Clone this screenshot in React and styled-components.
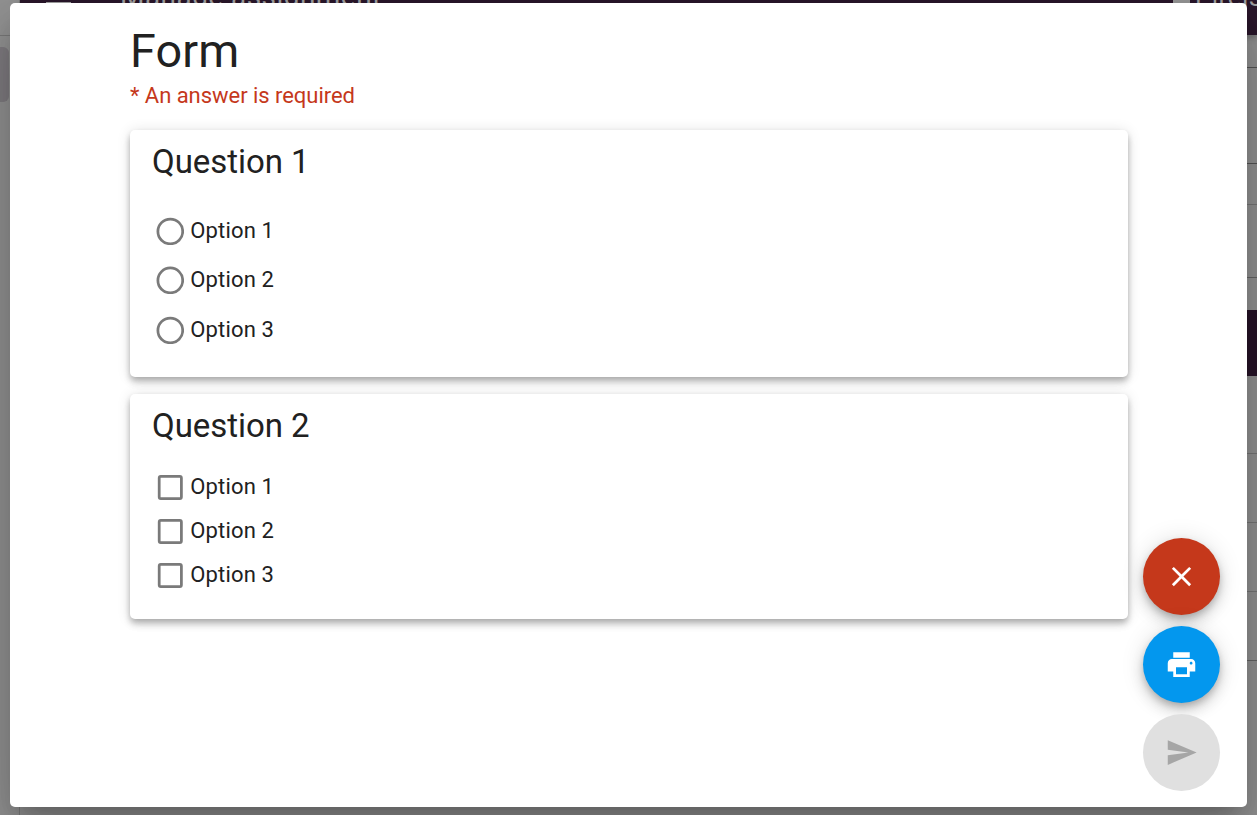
import React from "react"
import styled, { createGlobalStyle } from "styled-components"

const GlobalStyle = createGlobalStyle`
* {
    box-sizing: border-box;
}
body {
    margin: 0;
    overflow: hidden;
    font-family: Roboto, sans-serif;
    color: #212121;
    background: #949494;
}
`;

const Screen = styled.div`
position: relative;
height: 815px;
overflow: hidden;
`;

// page behind the dialog
const Page = styled.div`
display: flex;
height: 815px;
`;

const SideNav = styled.div`
width: 20px;
padding-top: 35px;
border-right: 1px solid #7d7d7d;
`;

const NavItem = styled.div`
height: 55px;
margin-top: 11px;
width: 9px;
border-radius: 0 6px 6px 0;
background: #817d82;
`;

const NavLine = styled.div`
height: 1px;
background: #7a7a7a;
`;

const Content = styled.div`
flex: 1;
`;

const Header = styled.div`
display: flex;
height: 35px;
padding-left: 26px;
background: #2a172b;
color: #a3a3a3;
box-shadow: 0 3px 6px rgba(0,0,0,0.25);
`;

const MenuBar = styled.div`
width: 25px;
height: 3px;
margin: 2px 49px 0 0;
background: #a3a3a3;
`;

const HeaderText = styled.div`
width: ${props => props.$width};
margin-top: -19px;
font-size: ${props => props.$size};
font-weight: 400;
line-height: 32px;
letter-spacing: 0.45px;
white-space: nowrap;
`;

const HeaderIcon = styled.div`
width: 17px;
height: 3px;
margin-right: 5px;
background: #999;
`;

const Row = styled.div`
height: ${props => props.$height}px;
border-bottom: 1px solid ${props => props.$line || "#777"};
`;

const Band = styled.div`
height: 66px;
margin-top: 32px;
background: #281529;
`;

const Dialog = styled.div`
position: absolute;
top: 3px;
left: 10px;
width: 1237px;
height: 804px;
padding: 19px 119px 0 120px;
border-radius: 5px;
background: #fff;
box-shadow: 0 15px 21px -10px rgba(0,0,0,0.2), 0 33px 52px 4px rgba(0,0,0,0.14), 0 12px 63px 11px rgba(0,0,0,0.12);
`;

const Title = styled.h1`
margin: 0;
font-size: 46.75px;
font-weight: 400;
line-height: 58px;
letter-spacing: 0.15px;
`;

const Required = styled.p`
margin: 1px 0 19px;
font-size: 22px;
line-height: 30px;
letter-spacing: -0.04px;
color: #c5381b;
`;

const Card = styled.div`
height: ${props => props.$height}px;
margin-bottom: 17px;
padding: 11px 22px;
border-radius: 5px;
background: #fff;
box-shadow: 0 3px 6px -1px rgba(0,0,0,0.2), 0 6px 7px 0 rgba(0,0,0,0.14), 0 1px 14px 0 rgba(0,0,0,0.12);
`;

const Question = styled.h2`
margin: 0;
font-size: 33px;
font-weight: 400;
line-height: 42px;
letter-spacing: -0.05px;
`;

const Options = styled.div`
display: flex;
flex-direction: column;
gap: ${props => props.$gap}px;
margin-top: ${props => props.$top}px;
padding-left: 4px;
`;

const Option = styled.label`
display: flex;
align-items: center;
height: 28px;
font-size: 22px;
letter-spacing: 0.15px;
`;

function Mark(props){
    return (
        <svg width="28" height="28" viewBox="0 0 28 28" fill="none" stroke="#7a7a7a" strokeWidth="2.75">
            {props.round
                ? <circle cx="14.3" cy="14.4" r="12.4" />
                : <rect x="3.2" y="3.4" width="22.2" height="22.2" rx="1.6" />}
        </svg>
    )
}

const OptionText = styled.span`
line-height: 26px;
margin: -0.3px 0 0 6.3px;
`;

const Actions = styled.div`
position: absolute;
right: 27px;
bottom: 16px;
display: flex;
flex-direction: column;
gap: 11px;
`;

const Fab = styled.button`
display: flex;
align-items: center;
justify-content: center;
width: 77px;
height: 77px;
padding: 0;
border: 0;
border-radius: 50%;
color: ${props => props.$fg || "#fff"};
background: ${props => props.$bg};
box-shadow: ${props => props.disabled ? "none" : "0 4px 7px -1px rgba(0,0,0,0.2), 0 8px 14px 0 rgba(0,0,0,0.14), 0 1px 25px 0 rgba(0,0,0,0.12)"};
`;

function Icon(props){
    return (
        <svg width="33" height="33" viewBox="0 0 24 24" fill="currentColor">
            <path d={props.d} />
        </svg>
    )
}

const questions = [
    { title: "Question 1", round: true, height: 247, top: 34, gap: 21.4 },
    { title: "Question 2", round: false, height: 225, top: 26, gap: 16 }
]

const options = ["Option 1", "Option 2", "Option 3"]

export default function App(){

    return (
        <Screen>
            <GlobalStyle />
            <Page>
                <SideNav>
                    <NavLine />
                    <NavItem />
                </SideNav>
                <Content>
                    <Header>
                        <MenuBar />
                        <HeaderText $width="1053px" $size="28px">Manage assignment</HeaderText>
                        <HeaderIcon />
                        <HeaderText $width="60px" $size="26px">Pireis</HeaderText>
                    </Header>
                    <Row $height={33} $line="#555" />
                    <Row $height={96} $line="#555" />
                    <Row $height={41} />
                    <Row $height={73} $line="#666" />
                    <Band />
                    <Row $height={78} />
                    <Row $height={69} />
                    <Row $height={69} />
                    <Row $height={69} $line="#666" />
                </Content>
            </Page>
            <Dialog>
                <Title>Form</Title>
                <Required>* An answer is required</Required>
                {questions.map(q => (
                    <Card key={q.title} $height={q.height}>
                        <Question>{q.title}</Question>
                        <Options $top={q.top} $gap={q.gap}>
                            {options.map(o => (
                                <Option key={o}>
                                    <Mark round={q.round} />
                                    <OptionText>{o}</OptionText>
                                </Option>
                            ))}
                        </Options>
                    </Card>
                ))}
                <Actions>
                    <Fab $bg="#c5381b">
                        <Icon d="M19 6.41 17.59 5 12 10.59 6.41 5 5 6.41 10.59 12 5 17.59 6.41 19 12 13.41 17.59 19 19 17.59 13.41 12z" />
                    </Fab>
                    <Fab $bg="#0397ee">
                        <Icon d="M19 8H5c-1.66 0-3 1.34-3 3v6h4v4h12v-4h4v-6c0-1.66-1.34-3-3-3zm-3 11H8v-5h8v5zm3-7c-.55 0-1-.45-1-1s.45-1 1-1 1 .45 1 1-.45 1-1 1zm-1-9H6v4h12V3z" />
                    </Fab>
                    <Fab $bg="#e0e0e0" $fg="#a6a6a6" disabled>
                        <Icon d="M2.01 21 23 12 2.01 3 2 10l15 2-15 2z" />
                    </Fab>
                </Actions>
            </Dialog>
        </Screen>
    )
}
